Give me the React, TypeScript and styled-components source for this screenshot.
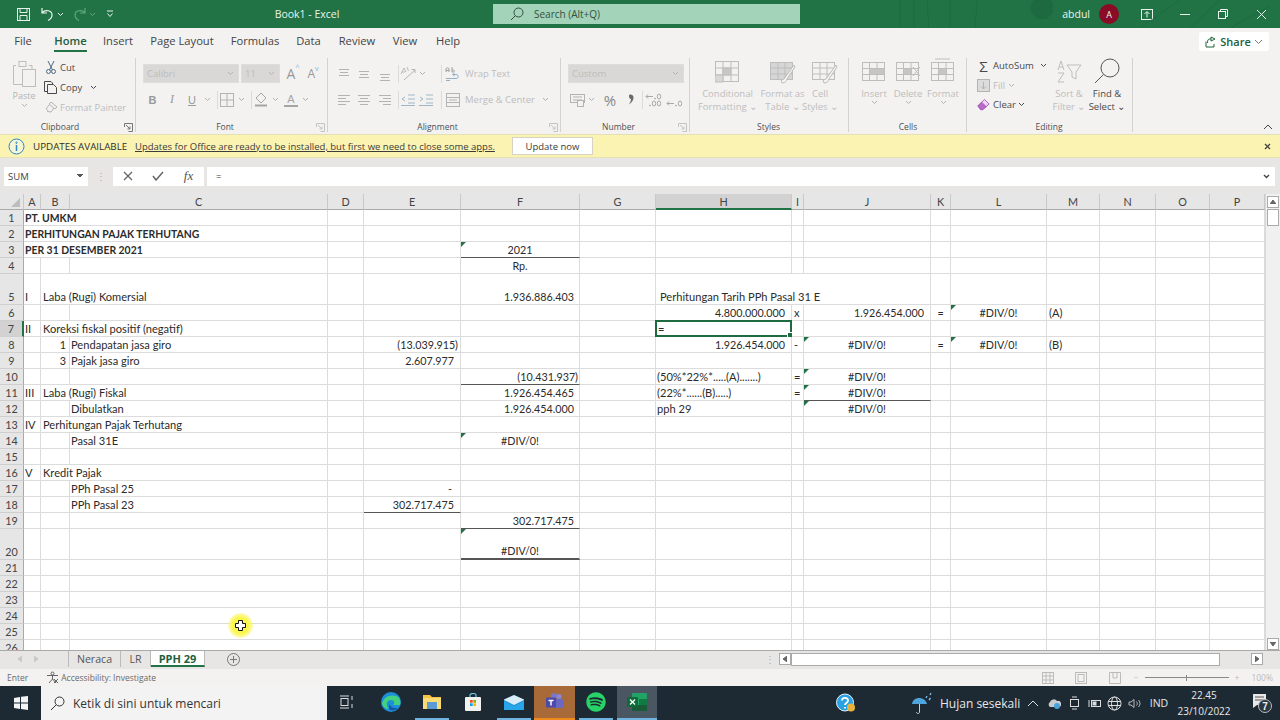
import React from "react";
import styled, { createGlobalStyle } from "styled-components";
import { FaSpotify } from "react-icons/fa";

const UI = `"Open Sans", "Noto Sans", sans-serif`;
const SHEET = `Lato, "Liberation Sans", sans-serif`;
const GREEN = "#217346";
const OFF = "#b3b3b3";
const ON = "#4a4a4a";

const Global = createGlobalStyle`
  html, body { margin: 0; padding: 0; overflow: hidden; background: #fff; }
  #root { width: 1280px; height: 720px; }
  * { box-sizing: border-box; }
`;

const Shell = styled.div`
  position: relative;
  width: 1280px;
  height: 720px;
  display: flex;
  flex-direction: column;
  overflow: hidden;
  font-family: ${UI};
  color: #333;
`;

/* title bar */
const TitleBar = styled.header`
  position: relative;
  height: 28px;
  flex: none;
  background: ${GREEN};
  display: grid;
  grid-template-columns: 493px 307px 1fr;
  align-items: center;
  color: #e9f3ed;
`;
const LeftTitle = styled.div`
  display: flex;
  align-items: center;
`;
const QuickAccess = styled.div`
  width: 187px;
  flex: none;
  display: grid;
  grid-template-columns: 24px 17px 16px 16px 17px 20px;
  align-items: center;
  padding-left: 16px;
`;
const BookName = styled.span`
  font-size: 10.5px;
  width: 240px;
  text-align: center;
  margin-left: 0;
`;
const SearchBox = styled.div`
  height: 20px;
  background: #a3d3b8;
  display: flex;
  align-items: center;
  gap: 10px;
  padding-left: 17px;
  font-size: 10px;
  color: #33503f;
`;
const WinControls = styled.div`
  display: flex;
  align-items: center;
  justify-content: flex-end;
  font-size: 10.5px;
`;
const Avatar = styled.span`
  width: 20px;
  height: 20px;
  margin: 0 22px 0 9px;
  border-radius: 50%;
  background: #8a0b26;
  font-size: 9px;
  display: flex;
  align-items: center;
  justify-content: center;
`;
const WinBtn = styled.span<{ $first?: boolean }>`
  width: 38px;
  margin-left: ${(p) => (p.$first ? 13 : 0)}px;
  display: flex;
  justify-content: center;
`;
const TitleTexture = styled.svg`
  position: absolute;
  right: 0;
  top: 0;
  pointer-events: none;
`;

/* tabs */
const TabRow = styled.nav`
  height: 27px;
  flex: none;
  background: #f3f2f1;
  display: flex;
  align-items: stretch;
  padding-left: 5px;
`;
const Tab = styled.div<{ $w: number; $on?: boolean }>`
  width: ${(p) => p.$w}px;
  display: flex;
  justify-content: center;
  font-size: 11.2px;
  color: ${(p) => (p.$on ? "#20603d" : "#444")};
  font-weight: ${(p) => (p.$on ? 600 : 400)};
  span {
    height: 24px;
    padding-top: 5px;
    border-bottom: ${(p) => (p.$on ? `2px solid ${GREEN}` : "0")};
  }
`;
const ShareBtn = styled.div`
  margin: 4px 11px 4px auto;
  width: 70px;
  background: #fff;
  border-radius: 2px;
  display: flex;
  align-items: center;
  justify-content: center;
  gap: 3px;
  font-size: 11px;
  font-weight: 600;
  color: #20603d;
`;

/* ribbon */
const Ribbon = styled.section`
  position: relative;
  height: 79px;
  flex: none;
  background: #f3f2f1;
  display: flex;
  padding-top: 3px;
`;
const Group = styled.div<{ $w: number }>`
  width: ${(p) => p.$w}px;
  height: 74px;
  margin-right: 1px;
  border-right: 1px solid #d4d2d0;
  display: grid;
  grid-template-rows: 1fr 13px;
  position: relative;
`;
const GroupBody = styled.div<{ $left?: number }>`
  display: flex;
  padding-left: ${(p) => p.$left ?? 0}px;
  min-width: 0;
`;
const GroupName = styled.div<{ $right?: number }>`
  font-size: 8.5px;
  line-height: 16px;
  text-align: center;
  color: #505050;
  padding-right: ${(p) => p.$right ?? 0}px;
`;
const Launcher = styled.svg`
  position: absolute;
  right: 2px;
  bottom: 0;
`;
const TwoRows = styled.div`
  display: flex;
  flex-direction: column;
  gap: 7px;
  padding-top: 6px;
`;
const ToolRow = styled.div`
  display: flex;
  align-items: center;
  height: 19px;
`;
const Slot = styled.span<{ $w: number; $tone?: string; $size?: number }>`
  width: ${(p) => p.$w}px;
  flex: none;
  display: inline-flex;
  align-items: center;
  justify-content: center;
  color: ${(p) => p.$tone ?? OFF};
  font-size: ${(p) => p.$size ?? 10}px;
`;
const FontLetter = styled(Slot)<{ $b?: boolean; $i?: boolean; $u?: boolean }>`
  font-family: ${(p) => (p.$i ? `"Liberation Serif", serif` : `"Liberation Sans", sans-serif`)};
  font-weight: ${(p) => (p.$b ? 700 : 400)};
  font-style: ${(p) => (p.$i ? "italic" : "normal")};
  text-decoration: ${(p) => (p.$u ? "underline" : "none")};
`;
const ColorLetter = styled(Slot)`
  font-family: "Liberation Sans", sans-serif;
  border-bottom: 2px solid #a5a5a5;
  line-height: 12px;
`;
const Grow = styled.span`
  display: inline-flex;
  align-items: flex-start;
  sup {
    font-size: 7px;
    line-height: 8px;
    color: #7fb3d5;
  }
`;
const Divider = styled.i`
  width: 1px;
  height: 18px;
  flex: none;
  background: #dddbd9;
`;
const Combo = styled.div<{ $w: number; $gap?: number }>`
  width: ${(p) => p.$w}px;
  height: 19px;
  flex: none;
  margin-left: ${(p) => p.$gap ?? 0}px;
  background: #d9d8d6;
  border: 1px solid #dedddb;
  color: #bcbcbc;
  font-size: 9.5px;
  padding-left: 3px;
  display: flex;
  align-items: center;
  justify-content: space-between;
  padding-right: 4px;
`;
const PasteCol = styled.div`
  width: 30px;
  display: flex;
  flex-direction: column;
  align-items: center;
  color: ${OFF};
  font-size: 9px;
  gap: 1px;
  padding-top: 2px;
  margin-right: 4px;
`;
const SmallStack = styled.div<{ $w?: number; $top?: number }>`
  display: flex;
  flex-direction: column;
  width: ${(p) => (p.$w ? `${p.$w}px` : "auto")};
  margin-top: ${(p) => p.$top ?? -1}px;
`;
const SmallTool = styled.div<{ $off?: boolean; $h?: number }>`
  height: ${(p) => p.$h ?? 20}px;
  display: flex;
  align-items: center;
  gap: 1px;
  font-size: 9.5px;
  white-space: nowrap;
  color: ${(p) => (p.$off ? "#bdbdbd" : ON)};
`;
const ToolLabel = styled.span<{ $off?: boolean }>`
  font-size: 9.5px;
  white-space: nowrap;
  margin-left: 2px;
  color: ${(p) => (p.$off ? "#bdbdbd" : ON)};
`;
const BigTool = styled.div<{ $w: number; $off?: boolean; $gap?: number; $iconShift?: number }>`
  width: ${(p) => p.$w}px;
  flex: none;
  margin-left: ${(p) => p.$gap ?? 0}px;
  display: flex;
  flex-direction: column;
  align-items: center;
  font-size: 9.5px;
  line-height: 13px;
  white-space: nowrap;
  color: ${(p) => (p.$off ? "#bdbdbd" : ON)};
  svg.big {
    height: 27px;
    margin-bottom: 2px;
    margin-left: ${(p) => p.$iconShift ?? 0}px;
    flex: none;
  }
`;
const CollapseCaret = styled.svg`
  position: absolute;
  right: 7px;
  bottom: 4px;
`;

/* update banner */
const Banner = styled.div`
  height: 24px;
  flex: none;
  background: #fbf3b1;
  border-top: 1px solid #e4e0b4;
  border-bottom: 1px solid #e6e2b5;
  display: flex;
  align-items: center;
  padding-left: 8px;
  font-size: 9.5px;
  color: #3c3c3c;
`;
const BannerTitle = styled.b`
  font-weight: 400;
  color: #2e2e2e;
  font-size: 9.8px;
  margin-left: 8px;
  width: 102px;
  white-space: nowrap;
`;
const BannerLink = styled.a`
  width: 377px;
  text-decoration: underline;
  white-space: nowrap;
`;
const UpdateBtn = styled.div`
  width: 81px;
  height: 18px;
  background: #fff;
  border: 1px solid #d6d3c4;
  display: flex;
  align-items: center;
  justify-content: center;
`;
const BannerClose = styled.span`
  margin-left: auto;
  margin-right: 9px;
  display: flex;
`;

/* formula bar */
const FormulaBar = styled.div`
  height: 36px;
  flex: none;
  background: #e7e6e5;
  display: flex;
  align-items: center;
  padding: 0 5px 0 4px;
  font-size: 9.5px;
  color: #444;
`;
const NameBox = styled.div`
  width: 84px;
  height: 19px;
  background: #fff;
  padding: 0 5px 0 4px;
  display: flex;
  align-items: center;
  justify-content: space-between;
`;
const Grip = styled.span`
  width: 25px;
  text-align: center;
  color: #aaa;
  font-size: 10px;
`;
const FxButtons = styled.div`
  width: 91px;
  height: 19px;
  background: #fff;
  margin-right: 3px;
  display: grid;
  grid-template-columns: 30px 30px 31px;
  align-items: center;
  justify-items: center;
`;
const FxMark = styled.span`
  font-family: "Liberation Serif", serif;
  font-style: italic;
  font-size: 13px;
  color: #555;
`;
const FormulaInput = styled.div`
  flex: 1;
  height: 19px;
  background: #fff;
  padding: 0 5px 0 9px;
  display: flex;
  align-items: center;
  justify-content: space-between;
`;

/* sheet */
const SheetArea = styled.main`
  flex: 1;
  min-height: 0;
  display: flex;
  background: #fff;
  overflow: hidden;
`;
const Sheet = styled.div`
  width: 1265px;
  display: grid;
  grid-template-columns: 24px 17px 29px 258px 36px 97px 119px 76px 136px 12px 127px 20px 96px 53px 56px 54px 55px;
  grid-template-rows: repeat(5, 16px) 31px repeat(14, 16px) 31px repeat(6, 16px);
  font-family: ${SHEET};
  color: #2b2b2b;
`;
const Corner = styled.div`
  background: #e6e6e6;
  border-right: 1px solid #c9c9c9;
  border-bottom: 1px solid #a9a9a9;
  position: relative;
  &::after {
    content: "";
    position: absolute;
    right: 3px;
    bottom: 2px;
    border-left: 9px solid transparent;
    border-bottom: 9px solid #bdbdbd;
  }
`;
const ColHead = styled.div<{ $on?: boolean }>`
  background: ${(p) => (p.$on ? "#d2d2d2" : "#e6e6e6")};
  border-right: 1px solid #c9c9c9;
  border-bottom: ${(p) => (p.$on ? `2px solid ${GREEN}` : "1px solid #a9a9a9")};
  display: flex;
  align-items: center;
  justify-content: center;
  font-size: 10.8px;
  color: #444;
`;
const RowHead = styled.div<{ $on?: boolean }>`
  background: ${(p) => (p.$on ? "#d2d2d2" : "#e6e6e6")};
  border-right: ${(p) => (p.$on ? `2px solid ${GREEN}` : "1px solid #a9a9a9")};
  border-bottom: 1px solid #cfcfcf;
  display: flex;
  align-items: flex-end;
  justify-content: center;
  font-size: 10.8px;
  line-height: 15px;
  color: #444;
`;
const Cell = styled.div<{
  $span: number;
  $align: string;
  $pad: number;
  $size: number;
  $bold?: boolean;
  $line?: string;
}>`
  position: relative;
  grid-column: span ${(p) => p.$span};
  display: flex;
  align-items: flex-end;
  justify-content: ${(p) => p.$align};
  padding: 0 ${(p) => p.$pad}px;
  font-size: ${(p) => p.$size}px;
  line-height: ${(p) => (p.$bold ? 13 : 15)}px;
  white-space: nowrap;
  font-weight: ${(p) => (p.$bold ? 700 : 400)};
  border-right: 1px solid #dcdcdc;
  border-bottom: ${(p) =>
    p.$line === "double"
      ? "2px solid #555"
      : p.$line === "single"
      ? "1px solid #555"
      : "1px solid #dcdcdc"};
`;
const ErrorMark = styled.i`
  position: absolute;
  left: 0;
  top: 0;
  border-top: 5px solid #217346;
  border-right: 5px solid transparent;
`;
const ActiveFrame = styled.i`
  position: absolute;
  inset: -1px;
  border: 2px solid #1f6b41;
  &::after {
    content: "";
    position: absolute;
    right: -3px;
    bottom: -3px;
    width: 4px;
    height: 4px;
    background: #1f6b41;
    border: 1px solid #fff;
  }
`;
const VScroll = styled.aside`
  width: 15px;
  background: #f0f0f0;
  border-left: 1px solid #d8d8d8;
  display: flex;
  flex-direction: column;
  align-items: center;
  padding-top: 2px;
`;
const ScrollBtn = styled.span<{ $end?: boolean }>`
  width: 12px;
  height: 12px;
  margin-top: ${(p) => (p.$end ? "auto" : 0)};
  background: #fff;
  border: 1px solid #aaa;
  display: flex;
  align-items: center;
  justify-content: center;
  flex: none;
`;
const VThumb = styled.span`
  width: 12px;
  height: 17px;
  margin-top: 1px;
  background: #fff;
  border: 1px solid #aaa;
`;

/* sheet tabs */
const TabStrip = styled.div`
  height: 19px;
  flex: none;
  background: #e7e6e5;
  border-top: 1px solid #a9a9a9;
  padding-bottom: 2px;
  display: flex;
  align-items: stretch;
  font-size: 10.6px;
  color: #555;
`;
const StripNav = styled.div`
  width: 69px;
  border-right: 1px solid #bbb;
  display: flex;
  align-items: center;
  gap: 12px;
  padding-left: 18px;
`;
const SheetTab = styled.div<{ $w: number; $on?: boolean }>`
  width: ${(p) => p.$w}px;
  display: flex;
  align-items: center;
  justify-content: center;
  background: ${(p) => (p.$on ? "#fff" : "transparent")};
  color: ${(p) => (p.$on ? "#20603d" : "#555")};
  font-size: ${(p) => (p.$on ? 11 : 10.6)}px;
  font-weight: ${(p) => (p.$on ? 700 : 400)};
  border-right: 1px solid #bbb;
  border-bottom: ${(p) => (p.$on ? `2px solid ${GREEN}` : "0")};
`;
const AddSheet = styled.div`
  width: 57px;
  display: flex;
  align-items: center;
  justify-content: center;
`;
const HScrollWrap = styled.div`
  margin-left: auto;
  width: 520px;
  display: flex;
  align-items: center;
  padding-right: 17px;
`;
const Dots = styled.span`
  width: 19px;
  text-align: center;
  color: #aaa;
  font-size: 10px;
`;
const HThumb = styled.span`
  width: 429px;
  height: 13px;
  background: #fff;
  border: 1px solid #aaa;
  flex: none;
`;
const HTrack = styled.span`
  flex: 1;
`;

/* status bar */
const StatusBar = styled.footer`
  height: 17px;
  flex: none;
  background: #f3f2f1;
  display: flex;
  align-items: center;
  padding-left: 7px;
  font-size: 8.5px;
  color: #6a6a6a;
`;
const Access = styled.span`
  margin-left: 18px;
  display: flex;
  align-items: center;
  gap: 2px;
`;
const StatusRight = styled.div`
  margin-left: auto;
  display: flex;
  align-items: center;
  color: #bbb;
  padding-right: 7px;
`;
const ZoomPct = styled.span`
  margin-left: 12px;
`;
const ZoomTrack = styled.span`
  width: 84px;
  height: 1px;
  margin: 0 6px;
  background: #888;
  display: flex;
  justify-content: center;
  align-items: center;
  &::after {
    content: "";
    width: 1px;
    height: 6px;
    background: #888;
  }
`;

/* taskbar */
const Taskbar = styled.div`
  height: 34px;
  flex: none;
  background: #1d2a34;
  display: flex;
  align-items: stretch;
  color: #e8e8e8;
`;
const StartBtn = styled.div`
  width: 41px;
  display: flex;
  align-items: center;
  justify-content: center;
`;
const TaskSearch = styled.div`
  width: 286px;
  background: #f3f3f3;
  color: #333;
  display: flex;
  align-items: center;
  gap: 8px;
  padding-left: 9px;
  font-size: 12px;
`;
const TaskApp = styled.div<{ $w?: number; $bg?: string; $bar?: string; $l?: number; $r?: number }>`
  width: ${(p) => p.$w ?? 41}px;
  flex: none;
  margin: 0 ${(p) => p.$r ?? 0}px 0 ${(p) => p.$l ?? 0}px;
  display: flex;
  align-items: center;
  justify-content: center;
  background: ${(p) => p.$bg ?? "transparent"};
  border-bottom: 2px solid ${(p) => p.$bar ?? "transparent"};
`;
const Tray = styled.div`
  margin-left: auto;
  display: flex;
  align-items: center;
  font-size: 10.5px;
`;
const TrayText = styled.span<{ $w?: number; $size?: number }>`
  white-space: nowrap;
  font-size: ${(p) => p.$size ?? 10.5}px;
  width: ${(p) => (p.$w ? `${p.$w}px` : "auto")};
`;
const Clock = styled.div`
  width: 60px;
  margin-right: 10px;
  text-align: center;
  font-size: 10px;
  line-height: 16px;
`;
const TraySlot = styled.span<{ $w: number; $l?: number }>`
  width: ${(p) => p.$w}px;
  margin-left: ${(p) => p.$l ?? 0}px;
  display: flex;
  justify-content: center;
`;
const Pointer = styled.div`
  position: absolute;
  left: 228px;
  top: 613px;
  width: 25px;
  height: 25px;
  border-radius: 50%;
  background: radial-gradient(circle, #fbf64c 0 45%, rgba(250, 248, 130, 0.5) 70%, rgba(255, 255, 255, 0) 100%);
  display: flex;
  align-items: center;
  justify-content: center;
`;

/* icons */
type IconProps = { w: number; h: number; c?: string; children: React.ReactNode; sw?: number };
const Ic = ({ w, h, c, children, sw }: IconProps) => (
  <svg width={w} height={h} viewBox={`0 0 ${w} ${h}`} fill="none" stroke={c ?? "currentColor"} strokeWidth={sw ?? 1}>
    {children}
  </svg>
);
const Chev = ({ c }: { c?: string }) => (
  <Ic w={7} h={5} c={c}>
    <path d="M1 1l2.5 2.5L6 1" />
  </Ic>
);
const LauncherMark = ({ c }: { c: string }) => (
  <Launcher width={9} height={9} viewBox="0 0 9 9" fill="none" stroke={c}>
    <path d="M.5 4V.5H8.5V8.5H4.5" />
    <path d="M2 2l4 4M6 3.5V6H3.5" />
  </Launcher>
);
const Lines = ({ rows }: { rows: [number, number, number][] }) => (
  <Ic w={16} h={14} c={OFF}>
    {rows.map(([x1, x2, y]) => (
      <path key={y} d={`M${x1} ${y}.5H${x2}`} />
    ))}
  </Ic>
);
const Brush = ({ bg }: { bg?: boolean }) => (
  <svg className="big" width={26} height={27} viewBox="0 0 26 27" fill="none" stroke="#bdbdbd">
    <rect x={0.5} y={4.5} width={22} height={17} fill={bg ? "#d6d6d6" : "none"} />
    <path d="M0 10H22M0 16H22M8 4V22M15 4V22" />
    <path d="M24 7L14 21l-3 1 1 3c3 0 5-2 5-4L25 9z" fill="#f3f2f1" />
  </svg>
);
const Excel = () => (
  <svg width={20} height={18} viewBox="0 0 20 18">
    <rect x={5} y={0} width={15} height={18} rx={1} fill="#21a366" />
    <rect x={12} y={6} width={8} height={6} fill="#107c41" />
    <rect x={5} y={12} width={15} height={6} fill="#185c37" />
    <rect x={0} y={4} width={11} height={10} rx={1} fill="#0f6b3a" />
    <path d="M3 6.500l5 5M8 6.500l-5 5" stroke="#fff" strokeWidth={1.3} />
  </svg>
);
// the two "increase / decrease decimal" buttons, arrow and small zeros
const DecimalIcon = ({ flip }: { flip?: boolean }) => (
  <svg width={18} height={14} viewBox="0 0 18 14" fill="none" stroke="#a8a8a8">
    <g transform={flip ? "translate(0 7)" : undefined}>
      <path d="M1 3.500H8M3 1.500L1 3.500 3 5.500" />
      <circle cx={10} cy={5.500} r={0.5} />
      <ellipse cx={14} cy={3.500} rx={1.7} ry={2.500} />
    </g>
    <g transform={flip ? "translate(0 -7)" : "translate(0 7)"}>
      <circle cx={5} cy={5.500} r={0.5} />
      <ellipse cx={9} cy={3.500} rx={1.700} ry={2.500} />
      <ellipse cx={14} cy={3.500} rx={1.700} ry={2.500} />
    </g>
  </svg>
);

type CellDef = {
  t?: string;
  a?: "l" | "r" | "c";
  b?: boolean;
  span?: number;
  pad?: number;
  line?: "single" | "double";
  mark?: boolean;
  active?: boolean;
};

const COLUMNS = ["A", "B", "C", "D", "E", "F", "G", "H", "I", "J", "K", "L", "M", "N", "O", "P"];

const num = (t: string, pad = 6, extra: Partial<CellDef> = {}): CellDef => ({ t, a: "r", pad, ...extra });
const err = (mark = true, extra: Partial<CellDef> = {}): CellDef => ({ t: "#DIV/0!", a: "c", mark, ...extra });
const sym = (t: string): CellDef => ({ t, a: "l", pad: 2 });

const DATA: Record<number, Record<string, CellDef>> = {
  1: { A: { t: "PT. UMKM", b: true, span: 3 } },
  2: { A: { t: "PERHITUNGAN PAJAK TERHUTANG", b: true, span: 3 } },
  3: { A: { t: "PER 31 DESEMBER 2021", b: true, span: 3 }, F: { t: "2021", a: "c", line: "single", mark: true } },
  4: { F: { t: "Rp.", a: "c" } },
  5: {
    A: { t: "I" },
    B: { t: "Laba (Rugi) Komersial", span: 2, pad: 2 },
    F: num("1.936.886.403", 5),
    H: { t: "Perhitungan Tarih PPh Pasal 31 E", span: 3, pad: 4 },
  },
  6: {
    H: num("4.800.000.000"),
    I: sym("x"),
    J: num("1.926.454.000"),
    K: { t: "=", a: "c" },
    L: err(),
    M: sym("(A)"),
  },
  7: { A: { t: "II" }, B: { t: "Koreksi fiskal positif (negatif)", span: 2, pad: 2 }, H: { t: "=", active: true, pad: 2 } },
  8: {
    B: num("1", 3),
    C: { t: "Pendapatan jasa giro" },
    E: num("(13.039.915)", 2),
    H: num("1.926.454.000"),
    I: sym("-"),
    J: err(),
    K: { t: "=", a: "c" },
    L: err(),
    M: sym("(B)"),
  },
  9: { B: num("3", 3), C: { t: "Pajak jasa giro" }, E: num("2.607.977") },
  10: {
    F: num("(10.431.937)", 1, { line: "single" }),
    H: { t: "(50%*22%*.....(A).......)" },
    I: sym("="),
    J: err(),
  },
  11: {
    A: { t: "III" },
    B: { t: "Laba (Rugi) Fiskal", span: 2, pad: 2 },
    F: num("1.926.454.465", 5),
    H: { t: "(22%*......(B).....)" },
    I: sym("="),
    J: err(true, { line: "single" }),
  },
  12: { C: { t: "Dibulatkan" }, F: num("1.926.454.000", 5), H: { t: "pph 29" }, J: err() },
  13: { A: { t: "IV" }, B: { t: "Perhitungan Pajak Terhutang", span: 2, pad: 2 } },
  14: { C: { t: "Pasal 31E" }, F: err() },
  16: { A: { t: "V" }, B: { t: "Kredit Pajak", span: 2, pad: 2 } },
  17: { C: { t: "PPh Pasal 25" }, E: num("-", 8) },
  18: { C: { t: "PPh Pasal 23" }, E: num("302.717.475", 6, { line: "single" }) },
  19: { F: num("302.717.475", 5, { line: "single" }) },
  20: { F: err(true, { line: "double" }) },
};

const ALIGN = { l: "flex-start", r: "flex-end", c: "center" };

const sizeOf = (d: CellDef) => (d.b ? 10.4 : d.a === "r" || d.a === "c" ? 10.75 : 11.1);

const SheetRows = () => {
  const out: React.ReactNode[] = [];
  for (let r = 1; r <= 26; r++) {
    out.push(
      <RowHead key={`h${r}`} $on={r === 7}>
        {r}
      </RowHead>
    );
    const defs = DATA[r] ?? {};
    for (let i = 0; i < COLUMNS.length; ) {
      const col = COLUMNS[i];
      const d = defs[col] ?? {};
      const span = d.span ?? 1;
      out.push(
        <Cell
          key={`${col}${r}`}
          $span={span}
          $align={ALIGN[d.a ?? "l"]}
          $pad={d.pad ?? 1}
          $size={sizeOf(d)}
          $bold={d.b}
          $line={d.line}
        >
          {d.mark && <ErrorMark />}
          {d.t}
          {d.active && <ActiveFrame />}
        </Cell>
      );
      i += span;
    }
  }
  return <>{out}</>;
};

const TABS: [string, number][] = [
  ["File", 36],
  ["Home", 59],
  ["Insert", 36],
  ["Page Layout", 92],
  ["Formulas", 54],
  ["Data", 53],
  ["Review", 44],
  ["View", 52],
  ["Help", 34],
];

const TopBar = () => (
  <TitleBar>
    <LeftTitle>
      <QuickAccess>
        <Ic w={15} h={15} c="#e9f3ed">
          <rect x={1.5} y={1.5} width={12} height={12} />
          <path d="M4 1.5V5.5H11V1.5M4 13.5V8.5H11V13.5" />
        </Ic>
        <Ic w={14} h={14} c="#e9f3ed" sw={1.2}>
          <path d="M2 1V6H7M2.3 5.5C5 2.5 12 3 12 8c0 3-2 4.5-4 5.5" />
        </Ic>
        <Chev c="#e9f3ed" />
        <Ic w={14} h={14} c="#5fa57f" sw={1.2}>
          <path d="M12 1V6H7M11.7 5.5C9 2.5 2 3 2 8c0 3 2 4.5 4 5.5" />
        </Ic>
        <Chev c="#5fa57f" />
        <Ic w={8} h={8} c="#e9f3ed">
          <path d="M1 1H7M1.5 3.5L4 6.5l2.5-3" />
        </Ic>
      </QuickAccess>
      <BookName>Book1 - Excel</BookName>
    </LeftTitle>
    <SearchBox>
      <Ic w={14} h={14} c="#33503f">
        <circle cx={8.5} cy={5.5} r={4.5} />
        <path d="M5.2 8.8L1 13" />
      </Ic>
      Search (Alt+Q)
    </SearchBox>
    <WinControls>
      abdul
      <Avatar>A</Avatar>
      <Ic w={12} h={11} c="#e9f3ed">
        <rect x={0.5} y={0.5} width={11} height={10} />
        <path d="M6 8.5V3M3.5 5L6 2.5 8.5 5" />
      </Ic>
      <WinBtn $first>
        <Ic w={10} h={10} c="#e9f3ed">
          <path d="M0 5.5H10" />
        </Ic>
      </WinBtn>
      <WinBtn>
        <Ic w={10} h={10} c="#e9f3ed">
          <rect x={0.5} y={2.5} width={7} height={7} />
          <path d="M2.5 2.5V.5H9.5V7.5H7.5" />
        </Ic>
      </WinBtn>
      <WinBtn>
        <Ic w={11} h={11} c="#e9f3ed">
          <path d="M1 1L10 10M10 1L1 10" />
        </Ic>
      </WinBtn>
    </WinControls>
    <TitleTexture width={400} height={28} viewBox="0 0 400 28" fill="none" stroke="#1e6a40">
      <circle cx={162} cy={8} r={11} fill="#1e6a40" />
      <path d="M20 0v28M34 0v28M48 0C46 10 50 20 48 28M70 0v28M96 0c3 10-3 20 0 28M300 0l-40 28M340 0l-30 28M390 6l-40 22" />
    </TitleTexture>
  </TitleBar>
);

const Tabs = () => (
  <TabRow>
    {TABS.map(([label, w]) => (
      <Tab key={label} $w={w} $on={label === "Home"}>
        <span>{label}</span>
      </Tab>
    ))}
    <ShareBtn>
      <Ic w={12} h={12} c="#20603d">
        <path d="M1 5.5V11H9V8M6 3H4.5C3 3 2.5 4.5 2.5 7M6 1v4l4-2z" />
      </Ic>
      Share
      <Ic w={9} h={6} c="#777">
        <path d="M1 1l3.5 3.5L8 1" />
      </Ic>
    </ShareBtn>
  </TabRow>
);

const AlignLines = ({ y }: { y: "top" | "mid" | "bot" }) => {
  const base = y === "top" ? 2 : y === "mid" ? 4 : 7;
  return (
    <Lines
      rows={[
        [3, 13, base],
        [4, 12, base + 3],
        [3, 13, base + 6],
      ]}
    />
  );
};

const HLines = ({ kind }: { kind: "l" | "c" | "r" }) => {
  const short: [number, number] = kind === "l" ? [2, 10] : kind === "c" ? [4, 12] : [6, 14];
  return (
    <Lines
      rows={[
        [2, 14, 2],
        [short[0], short[1], 5],
        [2, 14, 8],
        [short[0], short[1], 11],
      ]}
    />
  );
};

const ClipboardGroup = () => (
  <Group $w={136}>
    <GroupBody $left={9}>
      <PasteCol>
        <Ic w={24} h={28} c="#bdbdbd">
          <path d="M4 5.5H1.5V24.5H10M17 5.5h3V9" />
          <rect x={7} y={1.5} width={7} height={5} />
          <rect x={10.5} y={9.5} width={13} height={17} fill="#f3f2f1" />
        </Ic>
        Paste
        <Chev c={OFF} />
      </PasteCol>
      <SmallStack>
        <SmallTool>
          <Slot $w={16} $tone="#4a6a80">
            <Ic w={10} h={13}>
              <circle cx={2.5} cy={10.5} r={2} />
              <circle cx={7.5} cy={10.5} r={2} />
              <path d="M3.5 9L8 0M6.5 9L2 0" />
            </Ic>
          </Slot>
          Cut
        </SmallTool>
        <SmallTool>
          <Slot $w={16} $tone={ON}>
            <Ic w={14} h={13}>
              <path d="M3.5 10.5H.5V.5H7L8.5 2V4" />
              <path d="M3.5 3.5H9.5L12.5 6.5V12.5H3.5Z" />
            </Ic>
          </Slot>
          Copy
          <Slot $w={20} $tone={ON}>
            <Chev />
          </Slot>
        </SmallTool>
        <SmallTool $off>
          <Slot $w={16}>
            <Ic w={13} h={12}>
              <path d="M6 1l6 5-2 2-6-5zM4 4L1 8c1 0 2 1 1.5 2.5L6 11l3-4" />
            </Ic>
          </Slot>
          Format Painter
        </SmallTool>
      </SmallStack>
    </GroupBody>
    <GroupName $right={15}>Clipboard</GroupName>
    <LauncherMark c="#777" />
  </Group>
);

const FontGroup = () => (
  <Group $w={191}>
    <GroupBody $left={6}>
      <TwoRows>
        <ToolRow>
          <Combo $w={96}>
            Calibri
            <Chev c={OFF} />
          </Combo>
          <Combo $w={39} $gap={2}>
            11
            <Chev c={OFF} />
          </Combo>
          <Slot $w={3} />
          <Slot $w={20} $size={14} $tone="#999">
            <Grow>A<sup>^</sup></Grow>
          </Slot>
          <Slot $w={20} $size={12} $tone="#999">
            <Grow>A<sup>v</sup></Grow>
          </Slot>
        </ToolRow>
        <ToolRow>
          <FontLetter $w={19} $size={11} $tone="#999" $b>B</FontLetter>
          <FontLetter $w={20} $size={12} $tone="#999" $i>I</FontLetter>
          <FontLetter $w={20} $size={11} $tone="#999" $u>U</FontLetter>
          <Slot $w={10}>
            <Chev />
          </Slot>
          <Slot $w={5} />
          <Divider />
          <Slot $w={18}>
            <Ic w={14} h={14}>
              <rect x={0.5} y={0.5} width={13} height={13} />
              <path d="M7 0V14M0 7H14" />
            </Ic>
          </Slot>
          <Slot $w={10}>
            <Chev />
          </Slot>
          <Slot $w={5} />
          <Divider />
          <Slot $w={18}>
            <Ic w={14} h={15} c="#a5a5a5">
              <path d="M7 1L12 6 7 11 2 6z" />
              <path d="M1 13.5H13" strokeWidth={2} />
            </Ic>
          </Slot>
          <Slot $w={10}>
            <Chev />
          </Slot>
          <Slot $w={4} />
          <ColorLetter $w={14} $size={11} $tone="#a5a5a5">A</ColorLetter>
          <Slot $w={15}>
            <Chev />
          </Slot>
        </ToolRow>
      </TwoRows>
    </GroupBody>
    <GroupName $right={14}>Font</GroupName>
    <LauncherMark c="#c4c4c4" />
  </Group>
);

const AlignmentGroup = () => (
  <Group $w={232}>
    <GroupBody $left={5}>
      <TwoRows>
        <ToolRow>
          <Slot $w={20}><AlignLines y="top" /></Slot>
          <Slot $w={20}><AlignLines y="mid" /></Slot>
          <Slot $w={22}><AlignLines y="bot" /></Slot>
          <Slot $w={2} />
          <Divider />
          <Slot $w={18}>
            <svg width={16} height={15} viewBox="0 0 16 15" fill="none" stroke="#b3b3b3">
              <path d="M4 14L15 4M11.500 3.500H15V7" />
              <path d="M1 8l3-6 2 4M2 6h3M7 1l1.500 4" strokeWidth={0.9} />
            </svg>
          </Slot>
          <Slot $w={10}><Chev /></Slot>
          <Slot $w={14} />
          <Divider />
          <Slot $w={21}>
            <svg width={15} height={16} viewBox="0 0 15 16" fill="none" stroke="#8fb0c8">
              <path d="M1 6V3c0-1.500 3-1.500 3 0v3M1 4.500H4M7 1V6M7 4c3-1 3 3 0 2" stroke="#a0a0a0" />
              <path d="M1 12.500H11c3 0 3-4 0-4H8M9.500 7L7.500 8.500 9.500 10M5 14.500H1" />
            </svg>
          </Slot>
          <ToolLabel $off>Wrap Text</ToolLabel>
        </ToolRow>
        <ToolRow>
          <Slot $w={20}><HLines kind="l" /></Slot>
          <Slot $w={20}><HLines kind="c" /></Slot>
          <Slot $w={22}><HLines kind="r" /></Slot>
          <Slot $w={2} />
          <Divider />
          <Slot $w={18}>
            <Ic w={14} h={13} c="#9fb6c6">
              <path d="M7 2H14M7 6H14M7 10H14M0 12.500H14M4 4L1 6 4 8" />
            </Ic>
          </Slot>
          <Slot $w={18}>
            <Ic w={14} h={13} c="#9fb6c6">
              <path d="M7 2H14M7 6H14M7 10H14M0 12.500H14M1 4L4 6 1 8" />
            </Ic>
          </Slot>
          <Slot $w={6} />
          <Divider />
          <Slot $w={21}>
            <Ic w={14} h={14}>
              <rect x={0.5} y={0.5} width={13} height={13} />
              <path d="M0 4.500H14M0 9.500H14M3 7H11" />
            </Ic>
          </Slot>
          <ToolLabel $off>Merge &amp; Center</ToolLabel>
          <Slot $w={22}><Chev /></Slot>
        </ToolRow>
      </TwoRows>
    </GroupBody>
    <GroupName $right={14}>Alignment</GroupName>
    <LauncherMark c="#c4c4c4" />
  </Group>
);

const NumberGroup = () => (
  <Group $w={128}>
    <GroupBody $left={6}>
      <TwoRows>
        <ToolRow>
          <Combo $w={116}>
            Custom
            <Chev c={OFF} />
          </Combo>
        </ToolRow>
        <ToolRow>
          <Slot $w={18}>
            <Ic w={15} h={14}>
              <rect x={0.5} y={1.5} width={14} height={8} />
              <path d="M3 4H12M3 7H12" />
              <rect x={7.5} y={7.5} width={6} height={6} fill="#f3f2f1" />
            </Ic>
          </Slot>
          <Slot $w={10}><Chev /></Slot>
          <Slot $w={28} $size={15} $tone="#888">%</Slot>
          <Slot $w={14}>
            <svg width={6} height={11} viewBox="0 0 6 11">
              <path d="M1 1.500C1 0 5.500 0 5.500 3.500 5.500 7 3 9 1 10.500 2.500 8 3 6.500 3 5 1.500 5 1 3.500 1 1.500z" fill="#6a6a6a" />
            </svg>
          </Slot>
          <Slot $w={4} />
          <Divider />
          <Slot $w={21}><DecimalIcon /></Slot>
          <Slot $w={21}><DecimalIcon flip /></Slot>
        </ToolRow>
      </TwoRows>
    </GroupBody>
    <GroupName $right={14}>Number</GroupName>
    <LauncherMark c="#c4c4c4" />
  </Group>
);

const StylesGroup = () => (
  <Group $w={158}>
    <GroupBody $left={9}>
      <BigTool $w={55} $off>
        <svg className="big" width={25} height={27} viewBox="0 0 25 27" fill="none" stroke="#bdbdbd">
          <rect x={0.5} y={3.5} width={23} height={20} />
          <path d="M0 10H24M0 17H24M8 3V24M16 3V24" />
          <path d="M8 10h8v7H8z" fill="#c7c7c7" />
          <path d="M0 17h8v7H0z" fill="#d8d8d8" />
        </svg>
        <span>Conditional</span>
        <span>Formatting ⌄</span>
      </BigTool>
      <BigTool $w={47} $off $gap={4}>
        <Brush bg />
        <span>Format as</span>
        <span>Table ⌄</span>
      </BigTool>
      <BigTool $w={28} $off $iconShift={9}>
        <Brush />
        <span>Cell</span>
        <span>Styles ⌄</span>
      </BigTool>
    </GroupBody>
    <GroupName $right={2}>Styles</GroupName>
  </Group>
);

const CellsGroup = () => (
  <Group $w={117}>
    <GroupBody $left={7}>
      {["Insert", "Delete", "Format"].map((label, i) => (
        <BigTool key={label} $w={34} $off $gap={i === 2 ? 1 : 0}>
          <svg className="big" width={26} height={27} viewBox="0 0 26 27" fill="none" stroke="#bdbdbd">
            {i === 2 && <path d="M5 1H20" />}
            <rect x={1.5} y={4.5} width={22} height={18} />
            <path d="M1 10.500H24M1 16.500H24M8.500 4V23M16 4V23" />
            <rect x={8.5} y={10.5} width={i === 0 ? 15 : 8} height={6} fill="#c5c5c5" />
            {i === 1 && <path d="M18 9l7 9M25 9l-7 9" />}
          </svg>
          <span>{label}</span>
          <Chev c={OFF} />
        </BigTool>
      ))}
    </GroupBody>
    <GroupName>Cells</GroupName>
  </Group>
);

const EditingGroup = () => (
  <Group $w={165}>
    <GroupBody $left={9}>
      <SmallStack $w={75} $top={-2}>
        <SmallTool $h={19}>
          <Slot $w={13} $tone={ON} $size={15}>Σ</Slot>
          <ToolLabel>AutoSum</ToolLabel>
          <Slot $w={18} $tone={ON}><Chev /></Slot>
        </SmallTool>
        <SmallTool $h={20}>
          <Slot $w={13}>
            <Ic w={13} h={13}>
              <rect x={0.5} y={0.5} width={12} height={12} fill="#dcdcdc" />
              <path d="M6.500 3V9.500M4 7.500l2.500 2.500L9 7.500" />
            </Ic>
          </Slot>
          <ToolLabel $off>Fill</ToolLabel>
          <Slot $w={10}><Chev /></Slot>
        </SmallTool>
        <SmallTool $h={19}>
          <Slot $w={13}>
            <Ic w={14} h={13} c="#a858b8">
              <path d="M1 8L8 1l5 5-7 6H4z" fill="#f0d7f5" />
              <path d="M1 8l4-4 5 5-4 3H4z" fill="#b86ac8" />
            </Ic>
          </Slot>
          <ToolLabel>Clear</ToolLabel>
          <Slot $w={10} $tone={ON}><Chev /></Slot>
        </SmallTool>
      </SmallStack>
      <BigTool $w={34} $off>
        <svg className="big" width={26} height={27} viewBox="0 0 26 27" fill="none" stroke="#bdbdbd">
          <path d="M2 12L5 3l3 9M3 9H7M2 15H8L2 24H8" />
          <path d="M11 7H25L20 14V21L16 19V14Z" />
        </svg>
        <span>Sort &amp;</span>
        <span>Filter ⌄</span>
      </BigTool>
      <BigTool $w={40} $gap={1}>
        <svg className="big" width={28} height={27} viewBox="0 0 28 27" fill="none" stroke="#555">
          <circle cx={17} cy={10} r={9} />
          <path d="M10.500 16.500L2 25" />
        </svg>
        <span>Find &amp;</span>
        <span>Select ⌄</span>
      </BigTool>
    </GroupBody>
    <GroupName $right={2}>Editing</GroupName>
  </Group>
);

const RibbonBar = () => (
  <Ribbon>
    <ClipboardGroup />
    <FontGroup />
    <AlignmentGroup />
    <NumberGroup />
    <StylesGroup />
    <CellsGroup />
    <EditingGroup />
    <CollapseCaret width={10} height={6} viewBox="0 0 10 6" fill="none" stroke="#444">
      <path d="M1 5l4-4 4 4" />
    </CollapseCaret>
  </Ribbon>
);

const UpdateBanner = () => (
  <Banner>
    <Ic w={17} h={17} c="#2f86c1">
      <circle cx={8.5} cy={8.5} r={7.5} fill="#f5f6d8" />
      <path d="M8.500 7V13" strokeWidth={1.5} />
      <circle cx={8.5} cy={4.7} r={0.7} />
    </Ic>
    <BannerTitle>UPDATES AVAILABLE</BannerTitle>
    <BannerLink>Updates for Office are ready to be installed, but first we need to close some apps.</BannerLink>
    <UpdateBtn>Update now</UpdateBtn>
    <BannerClose>
      <Ic w={7} h={7} c="#444" sw={1.3}>
        <path d="M1 1L6 6M6 1L1 6" />
      </Ic>
    </BannerClose>
  </Banner>
);

const Formula = () => (
  <FormulaBar>
    <NameBox>
      SUM
      <Ic w={6} h={4} c="#555">
        <path d="M0 0H6L3 3z" fill="#555" />
      </Ic>
    </NameBox>
    <Grip>⋮</Grip>
    <FxButtons>
      <Ic w={10} h={10} c="#666" sw={1.3}>
        <path d="M1 1L9 9M9 1L1 9" />
      </Ic>
      <Ic w={12} h={10} c="#666" sw={1.5}>
        <path d="M1 5l3 4 7-8" />
      </Ic>
      <FxMark>fx</FxMark>
    </FxButtons>
    <FormulaInput>
      =
      <Ic w={7} h={5} c="#444" sw={1.4}>
        <path d="M1 1l2.500 2.500L6 1" />
      </Ic>
    </FormulaInput>
  </FormulaBar>
);

const Spreadsheet = () => (
  <SheetArea>
    <Sheet>
      <Corner />
      {COLUMNS.map((c) => (
        <ColHead key={c} $on={c === "H"}>
          {c}
        </ColHead>
      ))}
      <SheetRows />
    </Sheet>
    <VScroll>
      <ScrollBtn>
        <Ic w={6} h={4} c="#666">
          <path d="M0 4L3 0 6 4z" fill="#666" />
        </Ic>
      </ScrollBtn>
      <VThumb />
      <ScrollBtn $end>
        <Ic w={6} h={4} c="#666">
          <path d="M0 0L3 4 6 0z" fill="#666" />
        </Ic>
      </ScrollBtn>
    </VScroll>
  </SheetArea>
);

const SheetTabs = () => (
  <TabStrip>
    <StripNav>
      <Ic w={4} h={6} c="#c8c8c8"><path d="M4 0L0 3 4 6z" fill="#c8c8c8" /></Ic>
      <Ic w={4} h={6} c="#c8c8c8"><path d="M0 0L4 3 0 6z" fill="#c8c8c8" /></Ic>
    </StripNav>
    <SheetTab $w={52}>Neraca</SheetTab>
    <SheetTab $w={30}>LR</SheetTab>
    <SheetTab $w={54} $on>PPH 29</SheetTab>
    <AddSheet>
      <Ic w={13} h={13} c="#777">
        <circle cx={6.5} cy={6.5} r={6} />
        <path d="M6.500 3V10M3 6.500H10" />
      </Ic>
    </AddSheet>
    <HScrollWrap>
      <Dots>⋮</Dots>
      <ScrollBtn>
        <Ic w={4} h={6} c="#666"><path d="M4 0L0 3 4 6z" fill="#666" /></Ic>
      </ScrollBtn>
      <HThumb />
      <HTrack />
      <ScrollBtn>
        <Ic w={4} h={6} c="#666"><path d="M0 0L4 3 0 6z" fill="#666" /></Ic>
      </ScrollBtn>
    </HScrollWrap>
  </TabStrip>
);

const Status = () => (
  <StatusBar>
    Enter
    <Access>
      <Ic w={13} h={13} c="#666">
        <circle cx={6.5} cy={2.5} r={1.5} />
        <path d="M1 4.500H12M6.500 4.500V8L3 12M6.500 8L10 12M8 8l4 4M12 8l-4 4" />
      </Ic>
      Accessibility: Investigate
    </Access>
    <StatusRight>
      <Ic w={12} h={12}>
        <rect x={0.5} y={0.5} width={11} height={11} />
        <path d="M0 4H12M0 8H12M4 0V12M8 0V12" />
      </Ic>
      <Slot $w={21} />
      <Ic w={12} h={12}>
        <rect x={0.5} y={0.5} width={11} height={11} />
        <rect x={3} y={2.5} width={6} height={7} />
      </Ic>
      <Slot $w={22} />
      <Ic w={12} h={12}>
        <path d="M.5 .5H11.5V11.500H.5ZM4 .5V6H8V.5" />
      </Ic>
      <Slot $w={13} />
      −
      <ZoomTrack />
      +
      <ZoomPct>100%</ZoomPct>
    </StatusRight>
  </StatusBar>
);

const Windows = () => (
  <svg width={14} height={14} viewBox="0 0 14 14" fill="#f4f4f4">
    <path d="M0 2l6-1v5.500H0zM7 .8l7-.8v6.500H7zM0 7.500h6V13L0 12zM7 7.500h7V14l-7-.9z" />
  </svg>
);

const TaskBar = () => (
  <Taskbar>
    <StartBtn>
      <Windows />
    </StartBtn>
    <TaskSearch>
      <Ic w={15} h={15} c="#333">
        <circle cx={9.5} cy={5.5} r={4.5} />
        <path d="M6.200 8.800L1 14" />
      </Ic>
      Ketik di sini untuk mencari
    </TaskSearch>
    <TaskApp $w={38}>
      <Ic w={14} h={14} c="#ddd">
        <rect x={2} y={3.5} width={7} height={7} />
        <path d="M1 1H10M1 13H10M13 1V5M13 9V13" />
      </Ic>
    </TaskApp>
    <TaskApp $l={5}>
      <svg width={20} height={20} viewBox="0 0 20 20">
        <circle cx={10} cy={10} r={10} fill="#1d8fd8" />
        <path d="M1 12C2 5 9 2 15 4c4 1 5 6 4 9h-7c2-1 2-5-2-5C6 8 4 12 8 17c-3 0-6-2-7-5z" fill="#43d17f" />
        <path d="M8 17c2 2 6 2 9-1l-3 0C11 16 9 14 8.500 12 8 14 8 16 8 17z" fill="#1658a8" />
      </svg>
    </TaskApp>
    <TaskApp $w={34} $bar="#6fb3e0" $l={4} $r={3}>
      <svg width={18} height={16} viewBox="0 0 18 16">
        <path d="M0 1h7l2 2h9v12H0z" fill="#f6c445" />
        <rect x={0} y={4} width={18} height={11} fill="#fbdc74" />
        <rect x={4} y={8} width={10} height={7} fill="#5a9bd4" />
      </svg>
    </TaskApp>
    <TaskApp>
      <svg width={16} height={18} viewBox="0 0 16 18">
        <path d="M5 4V2c0-2 6-2 6 0v2" fill="none" stroke="#6fc4e8" strokeWidth={1.2} />
        <rect x={0} y={4} width={16} height={14} rx={1} fill="#f1f1ee" />
        <rect x={5} y={7} width={2.7} height={2.7} fill="#f25022" />
        <rect x={8.3} y={7} width={2.7} height={2.7} fill="#7fba00" />
        <rect x={5} y={10.3} width={2.7} height={2.7} fill="#00a4ef" />
        <rect x={8.3} y={10.3} width={2.7} height={2.7} fill="#ffb900" />
      </svg>
    </TaskApp>
    <TaskApp $w={34} $bar="#6fb3e0" $l={4} $r={3}>
      <svg width={20} height={15} viewBox="0 0 20 15">
        <path d="M0 5L10 0l10 5v10H0z" fill="#1a8fd8" />
        <path d="M0 5l10 5 10-5v-.5L10 0 0 4.500z" fill="#d9edf8" />
        <path d="M0 6l10 5 10-5v9H0z" fill="#29a6ea" />
      </svg>
    </TaskApp>
    <TaskApp $bg="#a96a3a" $bar="#ef8a1d">
      <svg width={20} height={18} viewBox="0 0 20 18">
        <circle cx={14} cy={3.5} r={2.5} fill="#8a86d8" />
        <circle cx={9} cy={3} r={3} fill="#7a77cf" />
        <rect x={8} y={6} width={11} height={9} rx={3} fill="#6b68c4" />
        <rect x={1} y={4.5} width={10} height={10} rx={1} fill="#4b4aa8" />
        <path d="M3.500 7.500H8.500M6 7.500V12.500" stroke="#fff" strokeWidth={1.4} />
      </svg>
    </TaskApp>
    <TaskApp $w={34} $bar="#6fb3e0" $l={4} $r={4}>
      <FaSpotify size={20} color="#27d366" />
    </TaskApp>
    <TaskApp $w={40} $bg="#4a5661" $bar="#6fb3e0">
      <Excel />
    </TaskApp>
    <Tray>
      <TraySlot $w={30}>
        <svg width={20} height={20} viewBox="0 0 20 20">
          <circle cx={9} cy={9.5} r={8.5} fill="#29a1e3" stroke="#e6f4fb" />
          <path d="M6 7.500C6 4 12 4 12 7.500 12 10 9 10 9 12M9 14v1.500" fill="none" stroke="#fff" strokeWidth={1.8} />
          <circle cx={15} cy={14.5} r={4} fill="#e8b23c" />
        </svg>
      </TraySlot>
      <TraySlot $w={36} $l={43}>
        <svg width={22} height={24} viewBox="0 0 22 24" fill="none">
          <path d="M1 13c1-8 13-8 15 0z" fill="#4ea6dc" />
          <path d="M8.500 13v8c0 2-3 2-3 0" stroke="#cfcfcf" />
          <path d="M15 7l1-2M18 9l1.500-2M19 4l1-2" stroke="#7fc2ee" strokeWidth={1.3} />
        </svg>
      </TraySlot>
      <TrayText $w={82} $size={12}>Hujan sesekali</TrayText>
      <TraySlot $w={22}>
        <Ic w={12} h={7} c="#ddd">
          <path d="M1 6l5-5 5 5" />
        </Ic>
      </TraySlot>
      <TraySlot $w={20}>
        <svg width={14} height={11} viewBox="0 0 14 11">
          <path d="M3 9a3 3 0 0 1 0-5 4 4 0 0 1 7-1 3 3 0 0 1 2 6z" fill="#c7ccd0" />
          <circle cx={10} cy={8} r={3} fill="#4aa3dd" />
        </svg>
      </TraySlot>
      <TraySlot $w={21}>
        <Ic w={11} h={14} c="#ddd">
          <rect x={1.5} y={3.5} width={8} height={7} />
          <path d="M3 1H8M3 13H8" />
        </Ic>
      </TraySlot>
      <TraySlot $w={19}>
        <Ic w={14} h={9} c="#ddd">
          <rect x={3.5} y={1.5} width={9} height={6} />
          <rect x={5} y={3} width={3} height={3} fill="#ddd" />
          <path d="M1 1v7" />
        </Ic>
      </TraySlot>
      <TraySlot $w={20}>
        <Ic w={15} h={15} c="#ddd">
          <circle cx={7.5} cy={7.5} r={6.5} />
          <ellipse cx={7.5} cy={7.5} rx={3} ry={6.5} />
          <path d="M1 5.500H14M1 9.500H14" />
        </Ic>
      </TraySlot>
      <TraySlot $w={20}>
        <Ic w={13} h={11} c="#bbb">
          <path d="M1 4H3L6 1.500V9.500L3 7H1zM8.500 3.500c1 1 1 3 0 4M10.500 2c2 2 2 5 0 7" />
        </Ic>
      </TraySlot>
      <TraySlot $w={30}>
        <TrayText>IND</TrayText>
      </TraySlot>
      <Clock>
        22.45
        <br />
        23/10/2022
      </Clock>
      <TraySlot $w={36}>
        <svg width={20} height={20} viewBox="0 0 20 20">
          <path d="M1 1H14V12H5L1 15z" fill="#e8e8e8" />
          <path d="M3 4H12M3 7H12" stroke="#555" />
          <circle cx={13} cy={13} r={6.5} fill="#2a3640" stroke="#bbb" />
          <text x={13} y={16.5} fontSize={10} fontWeight={700} textAnchor="middle" fill="#eee" fontFamily="Liberation Sans, sans-serif">7</text>
        </svg>
      </TraySlot>
    </Tray>
  </Taskbar>
);

export default function App() {
  return (
    <Shell>
      <Global />
      <TopBar />
      <Tabs />
      <RibbonBar />
      <UpdateBanner />
      <Formula />
      <Spreadsheet />
      <SheetTabs />
      <Status />
      <TaskBar />
      <Pointer>
        <svg width={11} height={11} viewBox="0 0 11 11">
          <path d="M3.500 .5H7.500V3.500H10.500V7.500H7.500V10.500H3.500V7.500H.5V3.500H3.500Z" fill="#fff" stroke="#111" />
        </svg>
      </Pointer>
    </Shell>
  );
}
